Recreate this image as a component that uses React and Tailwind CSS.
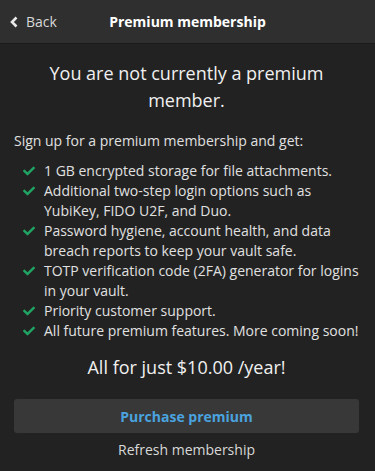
import { FaCheck } from 'react-icons/fa';

const features = [
  '1 GB encrypted storage for file attachments.',
  'Additional two-step login options such as YubiKey, FIDO U2F, and Duo.',
  'Password hygiene, account health, and data breach reports to keep your vault safe.',
  'TOTP verification code (2FA) generator for logins in your vault.',
  'Priority customer support.',
  'All future premium features. More coming soon!',
];

export default function App() {
  return (
    <div className="h-[471px] bg-[#222222] text-[#e0e0e0] font-['Open_Sans',sans-serif] overflow-hidden">
      <header className="h-[44px] bg-[#2f2f2f] border-b border-[#1a1a1a] flex items-center px-[9px] relative">
        <button className="flex items-center gap-[7px] text-[14px] text-[#d8d8d8]">
          <svg width="10" height="12" viewBox="0 0 10 12" fill="none">
            <path d="M7.5 1.5L3 6l4.5 4.5" stroke="#e8e8e8" strokeWidth="2.6" />
          </svg>
          Back
        </button>
        <h1 className="absolute left-0 right-0 text-center text-[14px] font-bold text-white pointer-events-none">
          Premium membership
        </h1>
      </header>
      <main className="pl-[14px] pr-[16px]">
        <p className="text-center text-[18px] leading-[27px] text-[#f0f0f0] mt-[16px] px-[10px]">
          You are not currently a premium member.
        </p>
        <p className="text-[14px] leading-[20px] mt-[17px]">Sign up for a premium membership and get:</p>
        <ul className="mt-[10px] pl-[9px]">
          {features.map((f) => (
            <li key={f} className="flex text-[14px] leading-[20px]">
              <FaCheck className="text-[#1fa463] w-[12px] h-[12px] mt-[4px] mr-[9px] shrink-0" />
              <span>{f}</span>
            </li>
          ))}
        </ul>
        <p className="text-center text-[18px] leading-[26px] text-[#f0f0f0] mt-[13px]">All for just $10.00 /year!</p>
        <button className="mt-[19px] w-full h-[34px] bg-[#383838] rounded-[3px] text-[14px] font-bold text-[#4aa3df]">
          Purchase premium
        </button>
        <p className="text-center text-[14px] leading-[20px] mt-[7px] text-[#d8d8d8]">Refresh membership</p>
      </main>
    </div>
  );
}
